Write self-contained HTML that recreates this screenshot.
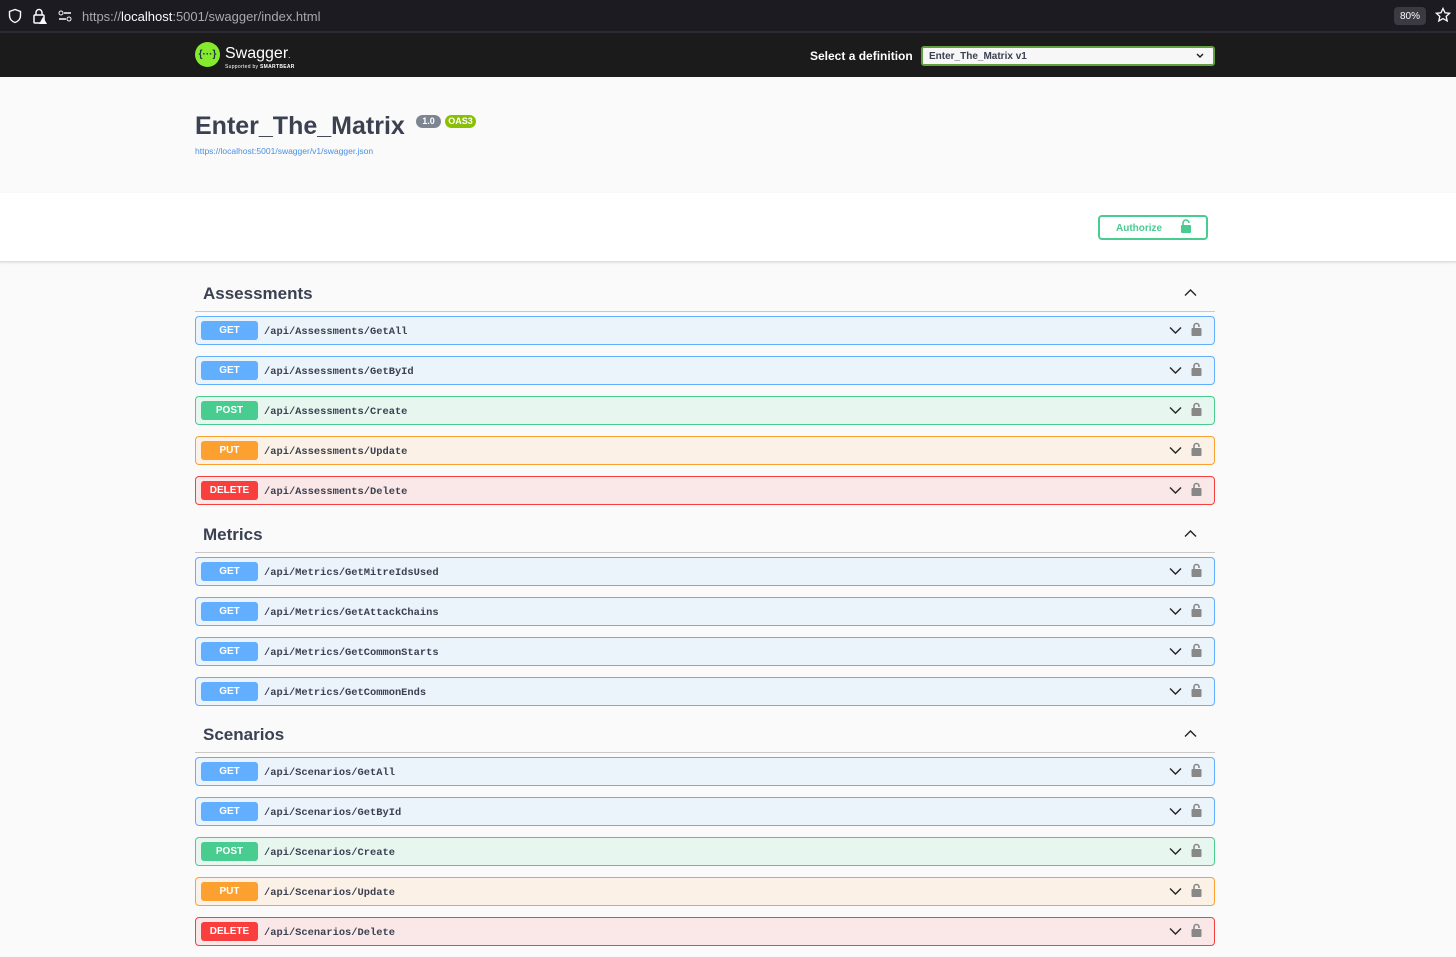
<!DOCTYPE html>
<html><head><meta charset="utf-8"><style>
*{margin:0;padding:0;box-sizing:border-box}
body{width:1456px;height:957px;overflow:hidden;background:#fafafa;font-family:"Liberation Sans",sans-serif;position:relative}
.abs{position:absolute}
.row{position:absolute;left:195px;width:1020px;height:29px;border:1px solid;border-radius:4px}
.g{background:#ebf3fb;border-color:#61affe}.g .m{background:#61affe}
.p{background:#e8f6f0;border-color:#49cc90}.p .m{background:#49cc90}
.u{background:#fbf1e6;border-color:#fca130}.u .m{background:#fca130}
.d{background:#fae7e7;border-color:#f93e3e}.d .m{background:#f93e3e}
.m{position:absolute;left:5px;top:4px;width:57px;height:19px;border-radius:3px;color:#fff;font-size:10px;font-weight:bold;text-align:center;line-height:20px}
.pa{position:absolute;left:68px;top:2px;line-height:27px;font-family:"Liberation Mono",monospace;font-weight:bold;font-size:10.4px;color:#3b4151}
.ch{position:absolute;left:973px;top:9px}
.lk{position:absolute;left:995px;top:5px}
.h{position:absolute;left:203px;font-size:17px;font-weight:bold;color:#3b4151}
.hl{position:absolute;left:195px;width:1020px;height:1px;background:#c9c9c9}
.up{position:absolute;left:1184px}
</style></head><body>
<div class="abs" style="left:0;top:0;width:1456px;height:32px;background:#1c1b22"></div>
<div class="abs" style="left:0;top:31px;width:1456px;height:2px;background:#2b2a33"></div>
<svg class="abs" style="left:7px;top:8px" width="16" height="16" viewBox="0 0 16 16"><path d="M8 1.5L2.5 3.5v4c0 3.5 2.5 6 5.5 7 3-1 5.5-3.5 5.5-7v-4z" fill="none" stroke="#fbfbfe" stroke-width="1.4"/></svg>
<svg class="abs" style="left:31px;top:7px" width="18" height="18" viewBox="0 0 18 18"><path d="M5 8V5.5a3 3 0 016 0V8" fill="none" stroke="#fbfbfe" stroke-width="1.5"/><rect x="3" y="8" width="10" height="8" rx="1" fill="none" stroke="#fbfbfe" stroke-width="1.5"/><path d="M12 10l4 7H8z" fill="#fbfbfe"/></svg>
<svg class="abs" style="left:58px;top:10px" width="14" height="12" viewBox="0 0 14 12"><circle cx="3" cy="3" r="2" fill="none" stroke="#fbfbfe"/><path d="M6 3h7M1 9h7" stroke="#fbfbfe" stroke-width="1.4"/><circle cx="11" cy="9" r="2" fill="none" stroke="#fbfbfe"/></svg>
<div class="abs" style="left:82px;top:9px;font-size:13px;color:#a8a8ae">https://<span style="color:#fbfbfe">localhost</span>:5001/swagger/index.html</div>
<div class="abs" style="left:1394px;top:7px;width:32px;height:18px;background:#3b3a43;border-radius:4px;color:#fbfbfe;font-size:10px;line-height:19px;text-align:center">80%</div>
<svg class="abs" style="left:1435px;top:7px" width="16" height="16" viewBox="0 0 16 16"><path d="M8 1.5l2 4.3 4.6.5-3.4 3.1 1 4.6L8 11.6 3.8 14l1-4.6L1.4 6.3 6 5.8z" fill="none" stroke="#fbfbfe" stroke-width="1.3"/></svg>

<div class="abs" style="left:0;top:33px;width:1456px;height:44px;background:#1b1b1b"></div>
<div class="abs" style="left:195px;top:42px;width:25px;height:25px;border-radius:50%;background:#85ea2d;color:#173647;font-size:10px;font-weight:bold;text-align:center;line-height:25px">{···}</div>
<div class="abs" style="left:225px;top:45px;color:#fff;font-size:16px">Swagger<span style="font-size:8px">.</span></div>
<div class="abs" style="left:225px;top:64px;color:#fff;font-size:5px;letter-spacing:.3px">Supported by <b>SMARTBEAR</b></div>
<div class="abs" style="left:810px;top:49px;color:#fff;font-size:12px;font-weight:bold">Select a definition</div>
<div class="abs" style="left:921px;top:46px;width:294px;height:20px;background:#f7f7f7;border:2px solid #62a03f;border-radius:3px;font-size:10px;font-weight:bold;color:#3b4151;padding-left:6px;line-height:18px">Enter_The_Matrix v1</div>
<svg class="abs" style="left:1196px;top:53px" width="8" height="6" viewBox="0 0 8 6"><path d="M1 1l3 3 3-3" fill="none" stroke="#222" stroke-width="1.5"/></svg>

<div class="abs" style="left:195px;top:112px;font-size:25px;font-weight:bold;color:#3b4151">Enter_The_Matrix</div>
<div class="abs" style="left:416px;top:115px;width:25px;height:13px;border-radius:7px;background:#7d8492;color:#fff;font-size:9px;font-weight:bold;text-align:center;line-height:13px">1.0</div>
<div class="abs" style="left:445px;top:115px;width:31px;height:13px;border-radius:7px;background:#89bf04;color:#fff;font-size:9px;font-weight:bold;text-align:center;line-height:13px">OAS3</div>
<div class="abs" style="left:195px;top:146px;font-size:8.5px;color:#4990e2">https://localhost:5001/swagger/v1/swagger.json</div>

<div class="abs" style="left:0;top:193px;width:1456px;height:69px;background:#fff;border-bottom:1px solid #e0e0e0;box-shadow:0 1px 2px rgba(0,0,0,.1)"></div>
<div class="abs" style="left:1098px;top:215px;width:110px;height:25px;border:2px solid #49cc90;border-radius:4px;color:#49cc90;font-size:10px;font-weight:bold;line-height:23px;padding-left:16px">Authorize</div>
<svg class="abs" style="left:1180px;top:219px" width="12" height="15" viewBox="0 0 12 15"><path d="M3 6V4a3 3 0 016 0" fill="none" stroke="#49cc90" stroke-width="1.6"/><rect x="1" y="6" width="10" height="8" rx="1" fill="#49cc90"/></svg>

<div class="h" style="top:284px">Assessments</div><div class="hl" style="top:311px"></div>
<svg class="up" style="top:288px" width="13" height="9" viewBox="0 0 13 9"><path d="M1 7.5l5.5-5.5 5.5 5.5" fill="none" stroke="#222" stroke-width="1.4"/></svg>
<div class="h" style="top:525px">Metrics</div><div class="hl" style="top:552px"></div>
<svg class="up" style="top:529px" width="13" height="9" viewBox="0 0 13 9"><path d="M1 7.5l5.5-5.5 5.5 5.5" fill="none" stroke="#222" stroke-width="1.4"/></svg>
<div class="h" style="top:725px">Scenarios</div><div class="hl" style="top:752px"></div>
<svg class="up" style="top:729px" width="13" height="9" viewBox="0 0 13 9"><path d="M1 7.5l5.5-5.5 5.5 5.5" fill="none" stroke="#222" stroke-width="1.4"/></svg>

<div class="row g" style="top:316px"><div class="m">GET</div><div class="pa">/api/Assessments/GetAll</div><svg class="ch" width="13" height="9" viewBox="0 0 13 9"><path d="M1 1.5l5.5 5.5 5.5-5.5" fill="none" stroke="#222" stroke-width="1.4"/></svg><svg class="lk" width="11" height="14" viewBox="0 0 11 14"><path d="M3 6V4a2.5 2.5 0 015 0v1" fill="none" stroke="#888" stroke-width="1.6"/><rect x="0.5" y="6" width="10" height="8" rx="1" fill="#888"/></svg></div>
<div class="row g" style="top:356px"><div class="m">GET</div><div class="pa">/api/Assessments/GetById</div><svg class="ch" width="13" height="9" viewBox="0 0 13 9"><path d="M1 1.5l5.5 5.5 5.5-5.5" fill="none" stroke="#222" stroke-width="1.4"/></svg><svg class="lk" width="11" height="14" viewBox="0 0 11 14"><path d="M3 6V4a2.5 2.5 0 015 0v1" fill="none" stroke="#888" stroke-width="1.6"/><rect x="0.5" y="6" width="10" height="8" rx="1" fill="#888"/></svg></div>
<div class="row p" style="top:396px"><div class="m">POST</div><div class="pa">/api/Assessments/Create</div><svg class="ch" width="13" height="9" viewBox="0 0 13 9"><path d="M1 1.5l5.5 5.5 5.5-5.5" fill="none" stroke="#222" stroke-width="1.4"/></svg><svg class="lk" width="11" height="14" viewBox="0 0 11 14"><path d="M3 6V4a2.5 2.5 0 015 0v1" fill="none" stroke="#888" stroke-width="1.6"/><rect x="0.5" y="6" width="10" height="8" rx="1" fill="#888"/></svg></div>
<div class="row u" style="top:436px"><div class="m">PUT</div><div class="pa">/api/Assessments/Update</div><svg class="ch" width="13" height="9" viewBox="0 0 13 9"><path d="M1 1.5l5.5 5.5 5.5-5.5" fill="none" stroke="#222" stroke-width="1.4"/></svg><svg class="lk" width="11" height="14" viewBox="0 0 11 14"><path d="M3 6V4a2.5 2.5 0 015 0v1" fill="none" stroke="#888" stroke-width="1.6"/><rect x="0.5" y="6" width="10" height="8" rx="1" fill="#888"/></svg></div>
<div class="row d" style="top:476px"><div class="m">DELETE</div><div class="pa">/api/Assessments/Delete</div><svg class="ch" width="13" height="9" viewBox="0 0 13 9"><path d="M1 1.5l5.5 5.5 5.5-5.5" fill="none" stroke="#222" stroke-width="1.4"/></svg><svg class="lk" width="11" height="14" viewBox="0 0 11 14"><path d="M3 6V4a2.5 2.5 0 015 0v1" fill="none" stroke="#888" stroke-width="1.6"/><rect x="0.5" y="6" width="10" height="8" rx="1" fill="#888"/></svg></div>

<div class="row g" style="top:557px"><div class="m">GET</div><div class="pa">/api/Metrics/GetMitreIdsUsed</div><svg class="ch" width="13" height="9" viewBox="0 0 13 9"><path d="M1 1.5l5.5 5.5 5.5-5.5" fill="none" stroke="#222" stroke-width="1.4"/></svg><svg class="lk" width="11" height="14" viewBox="0 0 11 14"><path d="M3 6V4a2.5 2.5 0 015 0v1" fill="none" stroke="#888" stroke-width="1.6"/><rect x="0.5" y="6" width="10" height="8" rx="1" fill="#888"/></svg></div>
<div class="row g" style="top:597px"><div class="m">GET</div><div class="pa">/api/Metrics/GetAttackChains</div><svg class="ch" width="13" height="9" viewBox="0 0 13 9"><path d="M1 1.5l5.5 5.5 5.5-5.5" fill="none" stroke="#222" stroke-width="1.4"/></svg><svg class="lk" width="11" height="14" viewBox="0 0 11 14"><path d="M3 6V4a2.5 2.5 0 015 0v1" fill="none" stroke="#888" stroke-width="1.6"/><rect x="0.5" y="6" width="10" height="8" rx="1" fill="#888"/></svg></div>
<div class="row g" style="top:637px"><div class="m">GET</div><div class="pa">/api/Metrics/GetCommonStarts</div><svg class="ch" width="13" height="9" viewBox="0 0 13 9"><path d="M1 1.5l5.5 5.5 5.5-5.5" fill="none" stroke="#222" stroke-width="1.4"/></svg><svg class="lk" width="11" height="14" viewBox="0 0 11 14"><path d="M3 6V4a2.5 2.5 0 015 0v1" fill="none" stroke="#888" stroke-width="1.6"/><rect x="0.5" y="6" width="10" height="8" rx="1" fill="#888"/></svg></div>
<div class="row g" style="top:677px"><div class="m">GET</div><div class="pa">/api/Metrics/GetCommonEnds</div><svg class="ch" width="13" height="9" viewBox="0 0 13 9"><path d="M1 1.5l5.5 5.5 5.5-5.5" fill="none" stroke="#222" stroke-width="1.4"/></svg><svg class="lk" width="11" height="14" viewBox="0 0 11 14"><path d="M3 6V4a2.5 2.5 0 015 0v1" fill="none" stroke="#888" stroke-width="1.6"/><rect x="0.5" y="6" width="10" height="8" rx="1" fill="#888"/></svg></div>

<div class="row g" style="top:757px"><div class="m">GET</div><div class="pa">/api/Scenarios/GetAll</div><svg class="ch" width="13" height="9" viewBox="0 0 13 9"><path d="M1 1.5l5.5 5.5 5.5-5.5" fill="none" stroke="#222" stroke-width="1.4"/></svg><svg class="lk" width="11" height="14" viewBox="0 0 11 14"><path d="M3 6V4a2.5 2.5 0 015 0v1" fill="none" stroke="#888" stroke-width="1.6"/><rect x="0.5" y="6" width="10" height="8" rx="1" fill="#888"/></svg></div>
<div class="row g" style="top:797px"><div class="m">GET</div><div class="pa">/api/Scenarios/GetById</div><svg class="ch" width="13" height="9" viewBox="0 0 13 9"><path d="M1 1.5l5.5 5.5 5.5-5.5" fill="none" stroke="#222" stroke-width="1.4"/></svg><svg class="lk" width="11" height="14" viewBox="0 0 11 14"><path d="M3 6V4a2.5 2.5 0 015 0v1" fill="none" stroke="#888" stroke-width="1.6"/><rect x="0.5" y="6" width="10" height="8" rx="1" fill="#888"/></svg></div>
<div class="row p" style="top:837px"><div class="m">POST</div><div class="pa">/api/Scenarios/Create</div><svg class="ch" width="13" height="9" viewBox="0 0 13 9"><path d="M1 1.5l5.5 5.5 5.5-5.5" fill="none" stroke="#222" stroke-width="1.4"/></svg><svg class="lk" width="11" height="14" viewBox="0 0 11 14"><path d="M3 6V4a2.5 2.5 0 015 0v1" fill="none" stroke="#888" stroke-width="1.6"/><rect x="0.5" y="6" width="10" height="8" rx="1" fill="#888"/></svg></div>
<div class="row u" style="top:877px"><div class="m">PUT</div><div class="pa">/api/Scenarios/Update</div><svg class="ch" width="13" height="9" viewBox="0 0 13 9"><path d="M1 1.5l5.5 5.5 5.5-5.5" fill="none" stroke="#222" stroke-width="1.4"/></svg><svg class="lk" width="11" height="14" viewBox="0 0 11 14"><path d="M3 6V4a2.5 2.5 0 015 0v1" fill="none" stroke="#888" stroke-width="1.6"/><rect x="0.5" y="6" width="10" height="8" rx="1" fill="#888"/></svg></div>
<div class="row d" style="top:917px"><div class="m">DELETE</div><div class="pa">/api/Scenarios/Delete</div><svg class="ch" width="13" height="9" viewBox="0 0 13 9"><path d="M1 1.5l5.5 5.5 5.5-5.5" fill="none" stroke="#222" stroke-width="1.4"/></svg><svg class="lk" width="11" height="14" viewBox="0 0 11 14"><path d="M3 6V4a2.5 2.5 0 015 0v1" fill="none" stroke="#888" stroke-width="1.6"/><rect x="0.5" y="6" width="10" height="8" rx="1" fill="#888"/></svg></div>
</body></html>
